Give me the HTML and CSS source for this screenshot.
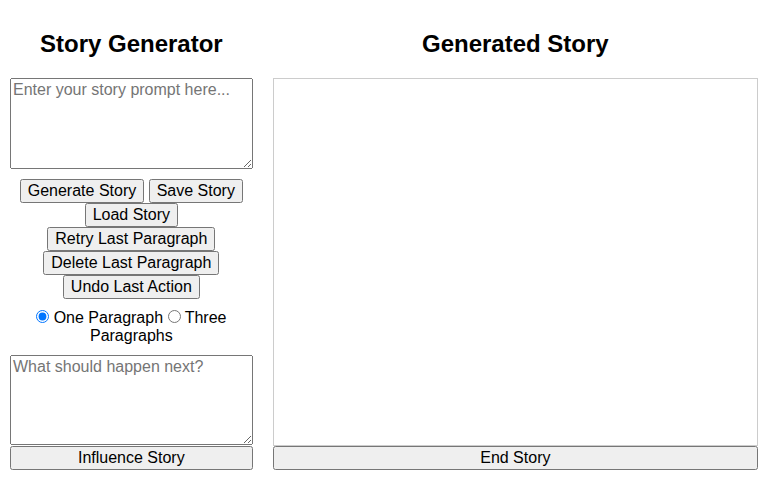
FILE: index.html
```html
<!DOCTYPE html>
<html lang="en">
<head>
<meta charset="utf-8">
<title>Story Generator</title>
<link rel="stylesheet" href="styles.css">
</head>
<body>
<div class="container">
  <div class="left">
    <h2>Story Generator</h2>
    <textarea class="prompt" placeholder="Enter your story prompt here..."></textarea>
    <div class="buttons">
      <button>Generate Story</button>
      <button>Save Story</button>
      <button>Load Story</button>
      <button>Retry Last Paragraph</button>
      <button>Delete Last Paragraph</button>
      <button>Undo Last Action</button>
    </div>
    <div class="options">
      <label><input type="radio" name="len" checked> One Paragraph</label>
      <label><input type="radio" name="len"> Three Paragraphs</label>
    </div>
    <textarea class="influence" placeholder="What should happen next?"></textarea>
    <button class="full influence-btn">Influence Story</button>
  </div>
  <div class="right">
    <h2>Generated Story</h2>
    <div class="story"></div>
    <button class="full">End Story</button>
  </div>
</div>
</body>
</html>
```
FILE: styles.css
```css
html, body {
  margin: 0;
  padding: 0;
  height: 100%;
}
body {
  font-family: "Liberation Sans", Arial, sans-serif;
  font-size: 16px;
  color: #000;
}
.container {
  display: flex;
  gap: 20px;
  padding: 10px;
  height: 100vh;
  box-sizing: border-box;
}
.left {
  flex: 1;
  display: flex;
  flex-direction: column;
  min-width: 0;
}
.left > * {
  flex: none;
}
.right {
  flex: 2;
  display: flex;
  flex-direction: column;
  min-width: 0;
}
h2 {
  text-align: center;
  font-size: 24px;
  margin: 20px 0;
}
textarea {
  width: 100%;
  height: 90px;
  box-sizing: border-box;
  font-family: "Liberation Sans", Arial, sans-serif;
  font-size: 16px;
  margin: 0;
}
.prompt {
  height: 91px;
}
.buttons {
  text-align: center;
  margin-top: 10px;
  line-height: 24px;
}
button {
  font-family: "Liberation Sans", Arial, sans-serif;
  font-size: 16px;
}
.options {
  text-align: center;
  margin: 10px 0;
}
.options input {
  margin: 0;
}
.story {
  flex: 1;
  border: 1px solid #ccc;
}
.full {
  width: 100%;
  flex: none;
}
.influence-btn {
  margin-top: 1px;
}
```
